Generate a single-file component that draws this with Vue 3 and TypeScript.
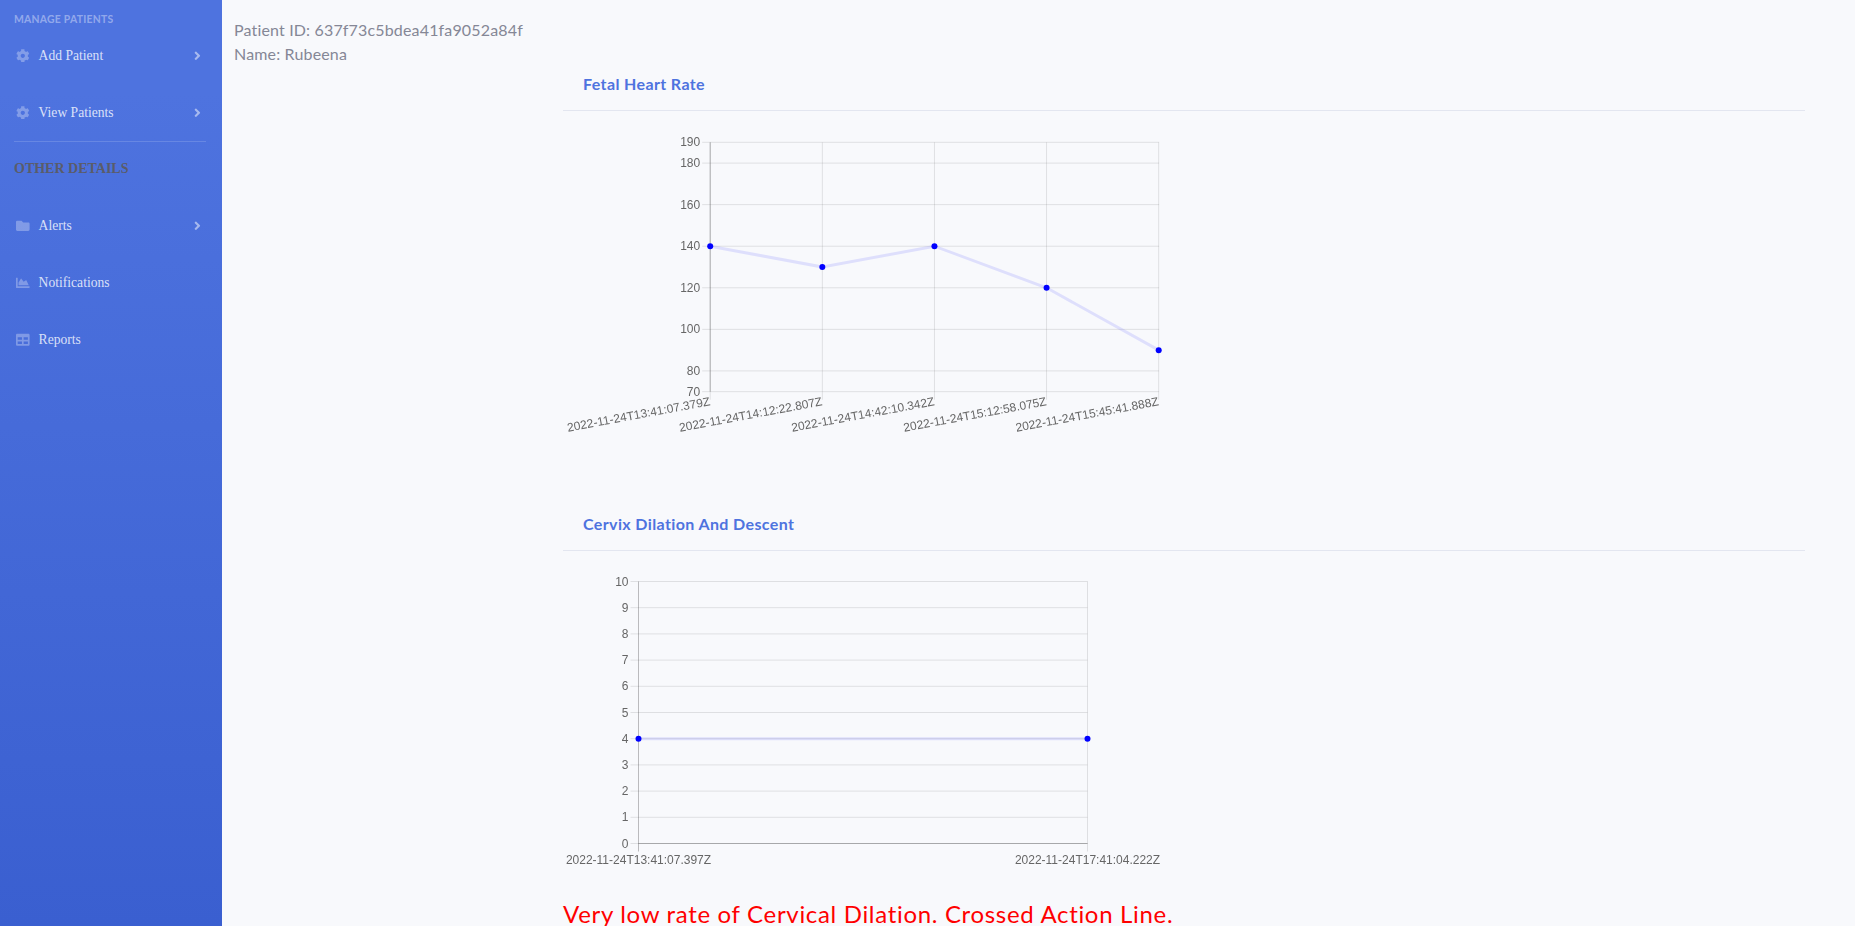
<script setup lang="ts">
interface NavItem { label: string; icon: string; chevron: boolean }
const cog = 'M487.4 315.7l-42.6-24.6c4.3-23.2 4.3-47 0-70.2l42.6-24.6c4.9-2.8 7.1-8.6 5.5-14-11.1-35.6-30-67.8-54.7-94.6-3.8-4.1-10-5.1-14.8-2.3L380.8 110c-17.9-15.4-38.5-27.3-60.8-35.1V25.8c0-5.6-3.9-10.5-9.4-11.7-36.7-8.2-74.3-7.8-109.2 0-5.5 1.2-9.4 6.1-9.4 11.7V75c-22.2 7.9-42.8 19.8-60.8 35.1L88.7 85.5c-4.9-2.8-11-1.9-14.8 2.3-24.7 26.7-43.6 58.9-54.7 94.6-1.7 5.4.6 11.2 5.5 14L67.3 221c-4.3 23.2-4.3 47 0 70.2l-42.6 24.6c-4.9 2.8-7.1 8.6-5.5 14 11.1 35.6 30 67.8 54.7 94.6 3.8 4.1 10 5.1 14.8 2.3l42.6-24.6c17.9 15.4 38.5 27.3 60.8 35.1v49.2c0 5.6 3.9 10.5 9.4 11.7 36.7 8.2 74.3 7.8 109.2 0 5.5-1.2 9.4-6.1 9.4-11.7v-49.2c22.2-7.9 42.8-19.8 60.8-35.1l42.6 24.6c4.9 2.8 11 1.9 14.8-2.3 24.7-26.7 43.6-58.9 54.7-94.6 1.5-5.5-.7-11.3-5.6-14.1zM256 336c-44.1 0-80-35.9-80-80s35.9-80 80-80 80 35.9 80 80-35.9 80-80 80z'
const folder = 'M464 128H272l-64-64H48C21.49 64 0 85.49 0 112v288c0 26.51 21.49 48 48 48h416c26.51 0 48-21.49 48-48V176c0-26.51-21.49-48-48-48z'
const area = 'M500 384c6.6 0 12 5.4 12 12v40c0 6.6-5.4 12-12 12H12c-6.6 0-12-5.4-12-12V76c0-6.6 5.4-12 12-12h40c6.6 0 12 5.4 12 12v308h436zM372.7 159.5L288 216l-85.3-113.7c-5.1-6.8-15.5-6.3-19.9 1L96 248v104h384l-84.9-180.9c-3.8-8.8-14.7-11.5-22.4-5.6z'
const table = 'M464 32H48C21.49 32 0 53.49 0 80v352c0 26.51 21.49 48 48 48h416c26.51 0 48-21.49 48-48V80c0-26.51-21.49-48-48-48zM224 416H64v-96h160v96zm0-160H64v-96h160v96zm224 160H288v-96h160v96zm0-160H288v-96h160v96z'
const angle = 'M224.3 273l-136 136c-9.4 9.4-24.6 9.4-33.9 0l-22.6-22.6c-9.4-9.4-9.4-24.6 0-33.9l96.4-96.4-96.4-96.4c-9.4-9.4-9.4-24.6 0-33.9L54.3 103c9.4-9.4 24.6-9.4 33.9 0l136 136c9.5 9.4 9.5 24.6.1 34z'

const groupOne: NavItem[] = [
  { label: 'Add Patient', icon: cog, chevron: true },
  { label: 'View Patients', icon: cog, chevron: true },
]
const groupTwo: NavItem[] = [
  { label: 'Alerts', icon: folder, chevron: true },
  { label: 'Notifications', icon: area, chevron: false },
  { label: 'Reports', icon: table, chevron: false },
]

// Chart 1: plot coordinates inside its 620 x 390 svg
const c1 = { l: 147.2, r: 596.2, t: 31.3, b: 280.7 }
const y1 = (v: number) => c1.b - ((v - 70) * (c1.b - c1.t)) / 120
const c1Ticks = [190, 180, 160, 140, 120, 100, 80, 70]
const c1Values = [140, 130, 140, 120, 90]
const c1Labels = [
  '2022-11-24T13:41:07.379Z',
  '2022-11-24T14:12:22.807Z',
  '2022-11-24T14:42:10.342Z',
  '2022-11-24T15:12:58.075Z',
  '2022-11-24T15:45:41.888Z',
]
const x1 = (i: number) => c1.l + (i * (c1.r - c1.l - 0.5)) / 4
const c1Line = c1Values.map((v, i) => `${x1(i)},${y1(v)}`).join(' ')

// Chart 2: plot coordinates inside its 620 x 349 svg
const c2 = { l: 75.5, r: 524.5, t: 30.5, b: 292.5 }
const y2 = (v: number) => c2.b - (v * (c2.b - c2.t)) / 10
const c2Ticks = [10, 9, 8, 7, 6, 5, 4, 3, 2, 1, 0]
</script>

<template>
  <div class="page">
    <aside class="sidebar">
      <div class="heading">Manage Patients</div>
      <a v-for="item in groupOne" :key="item.label" class="nav-item">
        <svg class="icon" viewBox="0 0 512 512"><path :d="item.icon" /></svg>
        <span class="nav-label">{{ item.label }}</span>
        <svg v-if="item.chevron" class="chevron" viewBox="0 0 256 512"><path :d="angle" /></svg>
      </a>
      <hr class="divider" />
      <div class="other">Other Details</div>
      <a v-for="item in groupTwo" :key="item.label" class="nav-item">
        <svg class="icon" viewBox="0 0 512 512"><path :d="item.icon" /></svg>
        <span class="nav-label">{{ item.label }}</span>
        <svg v-if="item.chevron" class="chevron" viewBox="0 0 256 512"><path :d="angle" /></svg>
      </a>
    </aside>

    <main class="main">
      <div class="patient">
        <div>Patient ID: 637f73c5bdea41fa9052a84f</div>
        <div>Name: Rubeena</div>
      </div>

      <section class="card first">
        <h6 class="card-header">Fetal Heart Rate</h6>
        <svg class="chart" width="620" height="390" viewBox="0 0 620 390">
          <g class="grid">
            <line v-for="t in c1Ticks" :key="t" :x1="c1.l - 8" :x2="c1.r" :y1="y1(t)" :y2="y1(t)" />
            <line v-for="(_, i) in c1Labels" :key="i" :x1="x1(i)" :x2="x1(i)" :y1="c1.t" :y2="c1.b + 8" />
          </g>
          <line class="axis" :x1="c1.l" :x2="c1.l" :y1="c1.t" :y2="c1.b" />
          <text v-for="t in c1Ticks" :key="t" class="tick" :x="c1.l - 10" :y="y1(t) + 4" text-anchor="end">{{ t }}</text>
          <text
            v-for="(label, i) in c1Labels"
            :key="label"
            class="tick"
            text-anchor="end"
            :transform="`translate(${x1(i) + 0.5} ${c1.b + 13.5}) rotate(-10.5)`"
          >{{ label }}</text>
          <polyline class="series" :points="c1Line" />
          <circle v-for="(v, i) in c1Values" :key="i" class="dot" :cx="x1(i)" :cy="y1(v)" r="3" />
        </svg>
      </section>

      <section class="card">
        <h6 class="card-header">Cervix Dilation And Descent</h6>
        <svg class="chart" width="620" height="349" viewBox="0 0 620 349">
          <g class="grid">
            <line v-for="t in c2Ticks" :key="t" :x1="c2.l - 8" :x2="c2.r" :y1="y2(t)" :y2="y2(t)" />
            <line :x1="c2.r" :x2="c2.r" :y1="c2.t" :y2="c2.b + 8" />
          </g>
          <line class="axis" :x1="c2.l" :x2="c2.l" :y1="c2.t" :y2="c2.b + 8" />
          <line class="axis" :x1="c2.l" :x2="c2.r" :y1="c2.b" :y2="c2.b" />
          <text v-for="t in c2Ticks" :key="t" class="tick" :x="c2.l - 10" :y="y2(t) + 4" text-anchor="end">{{ t }}</text>
          <text class="tick" :x="c2.l" :y="c2.b + 20" text-anchor="middle">2022-11-24T13:41:07.397Z</text>
          <text class="tick" :x="c2.r" :y="c2.b + 20" text-anchor="middle">2022-11-24T17:41:04.222Z</text>
          <line class="series" :x1="c2.l" :x2="c2.r" :y1="y2(4)" :y2="y2(4)" />
          <circle class="dot" :cx="c2.l" :cy="y2(4)" r="3" />
          <circle class="dot" :cx="c2.r" :cy="y2(4)" r="3" />
        </svg>
        <h4 class="warning">Very low rate of Cervical Dilation. Crossed Action Line.</h4>
      </section>
    </main>
  </div>
</template>

<style>
html, body { margin: 0; height: 100%; overflow: hidden; background: #f8f9fc; }
</style>

<style scoped>
.page {
  display: flex;
  height: 926px;
  overflow: hidden;
  background: #f8f9fc;
  font-family: Lato, "Open Sans", sans-serif;
}
.sidebar {
  width: 222px;
  flex: none;
  box-sizing: border-box;
  padding: 0 16px 0 0;
  background: linear-gradient(180deg, #4e73df 10%, #3a5fd0 100%);
}
.heading {
  height: 27px;
  padding: 12px 0 0 14px;
  box-sizing: border-box;
  font-size: 10.4px;
  line-height: 14px;
  font-weight: 700;
  letter-spacing: 0.25px;
  text-transform: uppercase;
  color: rgba(255, 255, 255, 0.4);
}
.nav-item {
  display: flex;
  align-items: center;
  height: 57px;
  padding: 0 5px 0 16px;
  font-family: "Liberation Serif", serif;
  font-size: 13.6px;
  color: rgba(255, 255, 255, 0.8);
}
.icon {
  width: 13.6px;
  height: 13.6px;
  flex: none;
  fill: rgba(255, 255, 255, 0.3);
}
.nav-label { margin-left: 9px; flex: 1; }
.chevron {
  width: 6.8px;
  height: 13.6px;
  flex: none;
  fill: rgba(255, 255, 255, 0.5);
}
.divider {
  margin: 0 0 0 14px;
  border: 0;
  border-top: 1px solid rgba(255, 255, 255, 0.15);
}
.other {
  height: 55px;
  padding-left: 14px;
  font-family: "Liberation Serif", serif;
  font-size: 14px;
  line-height: 54px;
  font-weight: 700;
  text-transform: uppercase;
  color: #5a5c69;
}
.main {
  flex: 1;
  min-width: 0;
  padding: 18px 50px 0 12px;
}
.patient {
  height: 43px;
  font-size: 16px;
  line-height: 24px;
  letter-spacing: 0.16px;
  color: #858796;
}
.card { margin-left: 329px; }
.card-header {
  margin: 0;
  padding: 9.5px 20px 14.5px;
  height: 25px;
  font-size: 16px;
  line-height: 25px;
  font-weight: 700;
  letter-spacing: 0.38px;
  color: #4e73df;
  border-bottom: 1px solid #e3e6f0;
}
.chart { display: block; will-change: transform; }
.grid line { stroke: rgba(0, 0, 0, 0.1); stroke-width: 1; }
.axis { stroke: rgba(0, 0, 0, 0.25); stroke-width: 1; }
.tick {
  font-family: "Liberation Sans", Arial, sans-serif;
  font-size: 12px;
  fill: #666;
}
.series { fill: none; stroke: rgba(0, 0, 255, 0.1); stroke-width: 3; }
.dot { fill: #0000ff; }
.warning {
  margin: -1px 0 0;
  font-size: 24px;
  line-height: 29px;
  font-weight: 400;
  letter-spacing: 0.68px;
  color: #ff0000;
}
</style>
